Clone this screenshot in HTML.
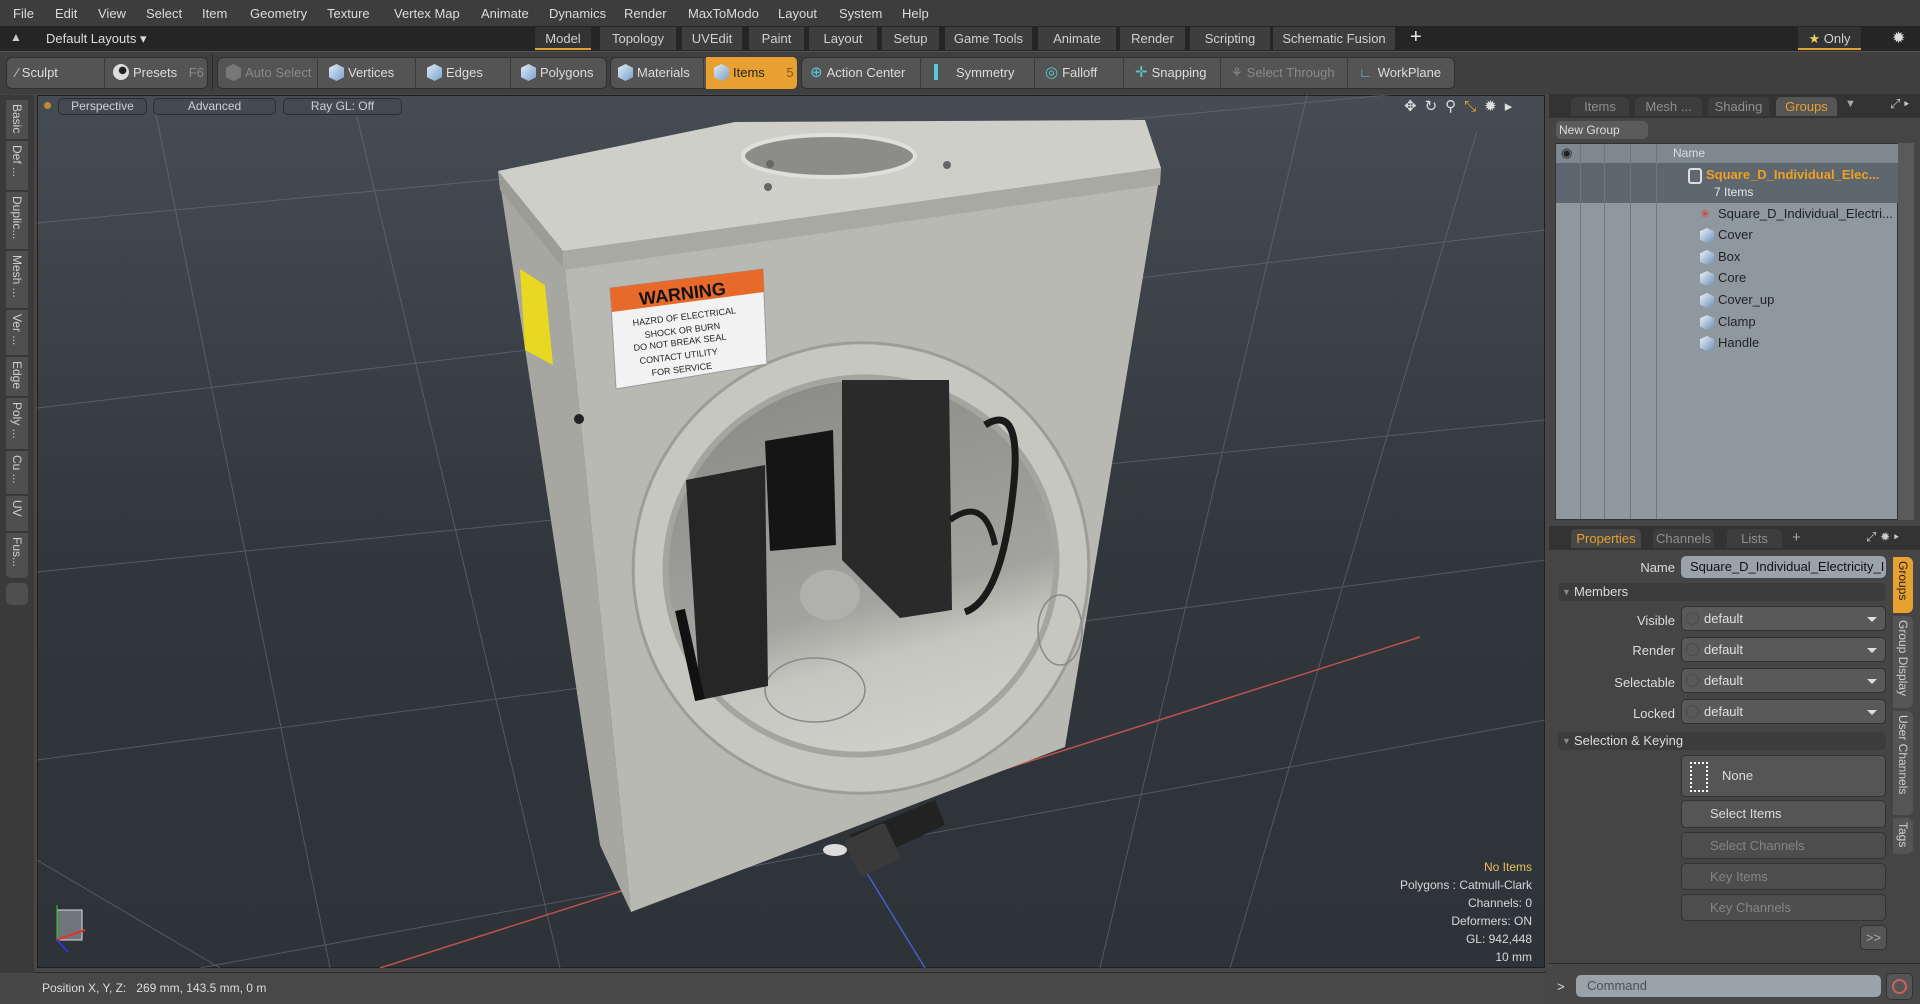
<!DOCTYPE html>
<html><head><meta charset="utf-8"><style>
*{margin:0;padding:0;box-sizing:border-box}
body{width:1920px;height:1004px;overflow:hidden;background:#474747;font-family:"Liberation Sans",sans-serif;font-size:13px;color:#d8d8d8;position:relative}
.a{position:absolute;white-space:nowrap}
.menu{left:0;top:0;width:1920px;height:26px;background:#3d3d3d}
.menu span{position:absolute;top:6px;font-size:13px;color:#dcdcdc}
.bar2{left:0;top:26px;width:1920px;height:25px;background:#252525}
.tab{position:absolute;top:27px;height:23px;background:#3e3e3e;color:#d0d0d0;font-size:13px;text-align:center;line-height:23px}
.tb{left:0;top:51px;width:1920px;height:43px;background:#3f3f3f;border-top:1px solid #555}
.grp{position:absolute;top:57px;height:32px;background:#545454;border-radius:6px;border:1px solid #303030}
.btn{position:absolute;top:57px;height:32px;line-height:32px;font-size:13px;color:#ddd;border-right:1px solid #3c3c3c}
.dim{color:#8a8a8a}
.ico{display:inline-block;width:15px;height:17px;vertical-align:-4px;margin:0 4px 0 8px;background:linear-gradient(135deg,#e0ecf8,#7aa0c8);clip-path:polygon(50% 0,100% 22%,100% 78%,50% 100%,0 78%,0 22%)}
.vp{left:37px;top:95px;width:1508px;height:873px;background:linear-gradient(#464c53,#30363b 55%,#2e3338);border:1px solid #1d1f21}
.vbtn{position:absolute;top:98px;height:17px;border:1px solid #2b2e31;border-radius:5px;background:#454a50;color:#d0d0d0;font-size:12px;text-align:center;line-height:15px}
.left{left:0;top:95px;width:34px;height:878px;background:#3a3a3a}
.vt{position:absolute;left:6px;width:22px;background:#4f4f4f;border-bottom:1px solid #353535;color:#cfcfcf;font-size:12px;writing-mode:vertical-rl;text-align:left;padding-top:4px;line-height:22px}
.status{left:34px;top:972px;width:1512px;height:32px;background:#484848;border-top:1px solid #2c2c2c}
.rp{left:1549px;top:94px;width:371px;height:910px;background:#454545}
.ptab{position:absolute;height:19px;line-height:19px;font-size:13px;color:#8f8f8f;text-align:center;background:#3d3d3d;border-radius:5px 5px 0 0}
.list{left:1555px;top:143px;width:343px;height:377px;background:#8f989f;border:1px solid #333}
.row{position:absolute;left:1718px;font-size:13px;color:#1e2226}
.cube{position:absolute;left:1700px;width:14px;height:15px;background:linear-gradient(135deg,#eef4fb,#6b8fb7);clip-path:polygon(50% 0,100% 22%,100% 78%,50% 100%,0 78%,0 22%)}
.lbl{position:absolute;font-size:13px;color:#dcdcdc;text-align:right;width:120px}
.dd{position:absolute;left:1681px;width:205px;height:25px;background:#595959;border:1px solid #303030;border-radius:5px}
.dd span{position:absolute;left:22px;top:4px;color:#e0e0e0;font-size:13px}
.dd i{position:absolute;left:4px;top:5px;width:13px;height:13px;border-radius:50%;border:1px solid #4a4a4a}
.dd b{position:absolute;right:8px;top:10px;border:5px solid transparent;border-top:5px solid #ddd;border-bottom:0}
.pb{position:absolute;left:1681px;width:205px;background:#555;border:1px solid #333;border-radius:5px;font-size:13px;color:#dcdcdc;padding-left:28px}
.sect{position:absolute;left:1558px;width:328px;height:18px;background:#3c3c3c;border-radius:5px;color:#dcdcdc;font-size:13px;line-height:18px;padding-left:16px}
.rvt{position:absolute;left:1893px;width:20px;background:#555;border-radius:0 6px 6px 0;writing-mode:vertical-rl;font-size:12px;color:#d0d0d0;line-height:20px;padding-top:4px}
</style></head><body>

<div class="a menu">
<span style="left:13px">File</span><span style="left:55px">Edit</span><span style="left:98px">View</span><span style="left:146px">Select</span><span style="left:202px">Item</span><span style="left:250px">Geometry</span><span style="left:327px">Texture</span><span style="left:394px">Vertex Map</span><span style="left:481px">Animate</span><span style="left:549px">Dynamics</span><span style="left:624px">Render</span><span style="left:688px">MaxToModo</span><span style="left:778px">Layout</span><span style="left:839px">System</span><span style="left:902px">Help</span>
</div>
<div class="a bar2"></div>
<div class="a" style="left:10px;top:30px;color:#ccc;font-size:12px">&#9650;</div>
<div class="a" style="left:46px;top:31px;font-size:13px;color:#ddd">Default Layouts &#9662;</div>
<div class="tab" style="left:535px;width:56px;border-bottom:2px solid #e0a030;background:#333">Model</div>
<div class="tab" style="left:600px;width:76px">Topology</div>
<div class="tab" style="left:682px;width:60px">UVEdit</div>
<div class="tab" style="left:749px;width:55px">Paint</div>
<div class="tab" style="left:809px;width:68px">Layout</div>
<div class="tab" style="left:882px;width:57px">Setup</div>
<div class="tab" style="left:945px;width:87px">Game Tools</div>
<div class="tab" style="left:1038px;width:78px">Animate</div>
<div class="tab" style="left:1120px;width:65px">Render</div>
<div class="tab" style="left:1190px;width:80px">Scripting</div>
<div class="tab" style="left:1273px;width:122px">Schematic Fusion</div>
<div class="a" style="left:1410px;top:26px;font-size:20px;color:#eee">+</div>
<div class="tab" style="left:1798px;width:63px;border-bottom:2px solid #e0a030;background:#333"><span style="color:#e8d060">&#9733;</span> Only</div>
<div class="a" style="left:1892px;top:28px;font-size:16px;color:#ddd">&#10041;</div>

<div class="a tb"></div>
<div class="grp" style="left:6px;width:202px"></div>
<div class="grp" style="left:217px;width:390px"></div>
<div class="grp" style="left:610px;width:188px"></div>
<div class="grp" style="left:801px;width:654px"></div>
<div class="a" style="left:212px;top:53px;width:1px;height:38px;background:#2a2a2a"></div>
<div class="btn" style="left:6px;width:99px"><span style="margin-left:10px;color:#ccc">&#8260;</span> Sculpt</div>
<div class="btn" style="left:105px;width:103px;border:0"><span style="display:inline-block;width:16px;height:16px;border-radius:50%;background:radial-gradient(circle at 60% 40%,#222 25%,#ddd 30%);vertical-align:-3px;margin:0 4px 0 8px"></span>Presets <span class="dim" style="margin-left:8px">F6</span></div>
<div class="btn dim" style="left:218px;width:100px"><span class="ico" style="background:#777"></span>Auto Select</div>
<div class="btn" style="left:321px;width:95px"><span class="ico"></span>Vertices <span class="dim" style="margin-left:10px">1</span></div>
<div class="btn" style="left:419px;width:92px"><span class="ico"></span>Edges <span class="dim" style="margin-left:18px">2</span></div>
<div class="btn" style="left:513px;width:93px;border:0"><span class="ico"></span>Polygons</div>
<div class="btn" style="left:610px;width:94px"><span class="ico"></span>Materials</div>
<div class="btn" style="left:706px;width:92px;background:#e8a030;color:#222;border-radius:0 5px 5px 0"><span class="ico"></span>Items <span style="margin-left:18px;color:#8a5a10">5</span></div>
<div class="btn" style="left:802px;width:119px"><span style="color:#5ac8d8;margin:0 4px 0 8px;font-size:15px">&#8853;</span>Action Center</div>
<div class="btn" style="left:922px;width:113px"><span style="display:inline-block;width:4px;height:16px;background:#5ac8d8;margin:0 18px 0 12px;vertical-align:-3px"></span>Symmetry</div>
<div class="btn" style="left:1037px;width:87px"><span style="color:#5ac8d8;margin:0 4px 0 8px;font-size:15px">&#9678;</span>Falloff</div>
<div class="btn" style="left:1127px;width:94px"><span style="color:#5ac8d8;margin:0 4px 0 8px;font-size:15px">&#10011;</span>Snapping</div>
<div class="btn dim" style="left:1223px;width:125px"><span style="margin:0 4px 0 8px">&#9880;</span>Select Through</div>
<div class="btn" style="left:1351px;width:104px;border:0"><span style="color:#5ac8d8;margin:0 6px 0 8px">&#8735;</span>WorkPlane</div>

<div class="a left"></div>
<div class="vt" style="top:100px;height:40px">Basic</div>
<div class="vt" style="top:141px;height:50px">Def ...</div>
<div class="vt" style="top:192px;height:58px">Duplic...</div>
<div class="vt" style="top:251px;height:58px">Mesh ...</div>
<div class="vt" style="top:310px;height:46px">Ver ...</div>
<div class="vt" style="top:357px;height:40px">Edge</div>
<div class="vt" style="top:398px;height:52px">Poly ...</div>
<div class="vt" style="top:451px;height:44px">Cu ...</div>
<div class="vt" style="top:496px;height:36px">UV</div>
<div class="vt" style="top:533px;height:46px;border-radius:0 0 5px 5px">Fus...</div>
<div class="a" style="left:6px;top:583px;width:22px;height:22px;background:#4f4f4f;border-radius:5px"></div>

<div class="a vp"></div>
<svg class="a" style="left:37px;top:95px" width="1508" height="873" viewBox="37 95 1508 873">
<defs>
<linearGradient id="ig" x1="0" y1="0" x2="0" y2="1"><stop offset="0" stop-color="#8c8c88"/><stop offset=".6" stop-color="#a2a29e"/><stop offset=".75" stop-color="#c6c6c0"/><stop offset="1" stop-color="#d0d0ca"/></linearGradient>
</defs>
<g stroke="#6f7880" stroke-width="1" opacity=".55" fill="none">
<line x1="37" y1="223" x2="1545" y2="80"/>
<line x1="37" y1="408" x2="1545" y2="230"/>
<line x1="37" y1="572" x2="1545" y2="420"/>
<line x1="37" y1="760" x2="1545" y2="560"/>
<line x1="200" y1="968" x2="1545" y2="720"/>
<line x1="153" y1="100" x2="330" y2="968"/>
<line x1="357" y1="117" x2="560" y2="968"/>
<line x1="1307" y1="95" x2="1100" y2="968"/>
<line x1="1477" y1="131" x2="1230" y2="968"/>
<line x1="37" y1="860" x2="220" y2="968"/>
</g>
<line x1="380" y1="968" x2="1420" y2="637" stroke="#c05050" stroke-width="1.5"/>
<line x1="857" y1="857" x2="925" y2="968" stroke="#4a5ad0" stroke-width="1.5"/>
<polygon points="498,171 502,196 600,845 631,912 563,251" fill="#a7a7a1"/>
<polygon points="563,251 1161,168 1065,747 631,912" fill="#b9b9b3"/>
<polygon points="498,171 735,122 1145,120 1161,168 563,251" fill="#cfcfc9"/>
<polygon points="498,171 563,251 563,268 500,190" fill="#9c9c96"/>
<polygon points="563,251 1161,168 1160,185 563,270" fill="#a9a9a3"/>
<ellipse cx="829" cy="156" rx="86" ry="21" fill="#8c8c88" stroke="#e0e0da" stroke-width="4"/>
<circle cx="770" cy="164" r="4" fill="#666"/><circle cx="947" cy="165" r="4" fill="#666"/><circle cx="768" cy="187" r="4" fill="#666"/>
<ellipse cx="861" cy="568" rx="228" ry="225" transform="rotate(-15 861 568)" fill="#c7c7c1" stroke="#9d9d97" stroke-width="3"/>
<ellipse cx="861" cy="566" rx="196" ry="188" transform="rotate(-15 861 566)" fill="url(#ig)" stroke="#a5a59f" stroke-width="6"/>
<ellipse cx="815" cy="690" rx="50" ry="32" fill="none" stroke="#888" stroke-width="1.5"/>
<ellipse cx="830" cy="595" rx="30" ry="25" fill="#b0b0ac"/>
<ellipse cx="1060" cy="630" rx="22" ry="35" fill="none" stroke="#888" stroke-width="1.5"/>
<polygon points="686,480 765,465 768,686 700,700" fill="#262626"/>
<polygon points="765,441 833,430 836,545 770,551" fill="#151515"/>
<polygon points="842,380 949,380 952,610 900,618 842,560" fill="#2a2a2a"/>
<path d="M985 425 Q1025 400 1012 500 Q1000 600 965 612" stroke="#1a1a1a" stroke-width="7" fill="none"/>
<path d="M950 520 Q985 495 995 545" stroke="#1a1a1a" stroke-width="6" fill="none"/>
<path d="M680 610 L700 700" stroke="#111" stroke-width="10"/>
<polygon points="610,288 763,269 767,364 616,389" fill="#f2f2f2" stroke="#999"/>
<polygon points="610,288 763,269 764,292 612,312" fill="#e86a2a"/>
<text x="640" y="305" font-family="Liberation Sans" font-weight="bold" font-size="18" fill="#111" transform="rotate(-7 640 305)">WARNING</text>
<text x="633" y="326" font-family="Liberation Sans" font-size="9" fill="#222" transform="rotate(-7 633 326)">HAZRD OF ELECTRICAL</text>
<text x="645" y="338" font-family="Liberation Sans" font-size="9" fill="#222" transform="rotate(-7 645 338)">SHOCK OR BURN</text>
<text x="634" y="351" font-family="Liberation Sans" font-size="9" fill="#222" transform="rotate(-7 634 351)">DO NOT BREAK SEAL</text>
<text x="640" y="364" font-family="Liberation Sans" font-size="9" fill="#222" transform="rotate(-7 640 364)">CONTACT UTILITY</text>
<text x="652" y="376" font-family="Liberation Sans" font-size="9" fill="#222" transform="rotate(-7 652 376)">FOR SERVICE</text>
<polygon points="520,269 545,285 553,365 525,350" fill="#e8d820"/>
<circle cx="579" cy="419" r="5" fill="#222"/>
<path d="M850 835 L935 800 L945 825 L870 860Z" fill="#222"/>
<rect x="850" y="830" width="45" height="40" rx="4" fill="#3a3a3a" transform="rotate(-25 872 850)"/>
<ellipse cx="835" cy="850" rx="12" ry="6" fill="#ddd"/>
<rect x="57" y="910" width="25" height="30" fill="#70757a" stroke="#ddd"/>
<line x1="57" y1="905" x2="57" y2="940" stroke="#3c3"/><line x1="57" y1="940" x2="85" y2="930" stroke="#d33" stroke-width="2"/><line x1="57" y1="940" x2="68" y2="952" stroke="#33d" stroke-width="2"/>
</svg>
<div class="a" style="left:44px;top:102px;width:7px;height:7px;border-radius:50%;background:#c08a30"></div>
<div class="vbtn" style="left:58px;width:89px">Perspective</div>
<div class="vbtn" style="left:153px;width:123px">Advanced</div>
<div class="vbtn" style="left:283px;width:119px">Ray GL: Off</div>
<div class="a" style="left:1404px;top:97px;font-size:15px;color:#ddd;letter-spacing:8px">&#10021;&#8635;&#9906;<span style="color:#e0b020">&#10529;</span>&#10041;&#9656;</div>
<div class="a" style="left:1300px;top:858px;width:232px;text-align:right;font-size:12px;line-height:18px;color:#d8d8d8"><span style="color:#e8c060">No Items</span><br>Polygons : Catmull-Clark<br>Channels: 0<br>Deformers: ON<br>GL: 942,448<br>10 mm</div>

<div class="a status"><span class="a" style="left:8px;top:8px;font-size:12px;color:#ddd">Position X, Y, Z:&nbsp;&nbsp; 269 mm, 143.5 mm, 0 m</span></div>

<div class="a rp"></div>
<div class="a" style="left:1549px;top:94px;width:371px;height:24px;background:#333"></div>
<div class="ptab" style="left:1571px;top:97px;width:58px">Items</div>
<div class="ptab" style="left:1635px;top:97px;width:67px">Mesh ...</div>
<div class="ptab" style="left:1708px;top:97px;width:61px">Shading</div>
<div class="ptab" style="left:1776px;top:97px;width:61px;background:#555;color:#e8a030">Groups</div>
<div class="a" style="left:1845px;top:98px;color:#aaa;font-size:11px">&#9660;</div>
<div class="a" style="left:1890px;top:96px;color:#ccc;font-size:13px">&#10530; &#9656;</div>
<div class="a" style="left:1556px;top:121px;width:92px;height:18px;background:#5b5b5b;border-radius:5px;font-size:12px;color:#ddd;padding-left:3px;line-height:18px">New Group</div>
<div class="a list"></div>
<div class="a" style="left:1556px;top:144px;width:342px;height:19px;background:#7f8890"></div>
<div class="a" style="left:1556px;top:163px;width:342px;height:40px;background:#5e676f"></div>
<div class="a" style="left:1580px;top:144px;width:1px;height:375px;background:#6e777e"></div>
<div class="a" style="left:1604px;top:144px;width:1px;height:375px;background:#6e777e"></div>
<div class="a" style="left:1630px;top:144px;width:1px;height:375px;background:#6e777e"></div>
<div class="a" style="left:1656px;top:144px;width:1px;height:375px;background:#6e777e"></div>
<div class="a" style="left:1898px;top:143px;width:16px;height:377px;background:#5a5a5a"></div>
<div class="a" style="left:1561px;top:145px;font-size:13px;color:#222">&#9673;</div>
<div class="a" style="left:1673px;top:146px;font-size:12px;color:#d8dde2">Name</div>
<div class="a" style="left:1688px;top:168px;width:14px;height:16px;border:2px solid #ddd;border-radius:3px"></div>
<div class="a" style="left:1706px;top:167px;font-size:13px;font-weight:bold;color:#f0a020">Square_D_Individual_Elec...</div>
<div class="a" style="left:1714px;top:185px;font-size:12px;color:#e4e8ec">7 Items</div>
<div class="cube" style="top:207px;background:none;clip-path:none;color:#d33;font-size:12px">&#10035;</div>
<div class="row" style="top:206px">Square_D_Individual_Electri...</div>
<div class="cube" style="top:228px"></div><div class="row" style="top:227px">Cover</div>
<div class="cube" style="top:250px"></div><div class="row" style="top:249px">Box</div>
<div class="cube" style="top:271px"></div><div class="row" style="top:270px">Core</div>
<div class="cube" style="top:293px"></div><div class="row" style="top:292px">Cover_up</div>
<div class="cube" style="top:315px"></div><div class="row" style="top:314px">Clamp</div>
<div class="cube" style="top:336px"></div><div class="row" style="top:335px">Handle</div>

<div class="a" style="left:1549px;top:526px;width:371px;height:24px;background:#333"></div>
<div class="ptab" style="left:1571px;top:529px;width:70px;background:#474747;color:#e8a030">Properties</div>
<div class="ptab" style="left:1653px;top:529px;width:61px">Channels</div>
<div class="ptab" style="left:1727px;top:529px;width:55px">Lists</div>
<div class="a" style="left:1792px;top:529px;color:#aaa;font-size:15px">+</div>
<div class="a" style="left:1866px;top:529px;color:#ccc;font-size:13px">&#10530; &#10041; &#9656;</div>
<div class="lbl" style="left:1555px;top:560px">Name</div>
<div class="a" style="left:1681px;top:556px;width:205px;height:22px;background:#9aa2aa;border-radius:5px;font-size:13px;color:#111;padding:3px 0 0 9px;overflow:hidden">Square_D_Individual_Electricity_I</div>
<div class="sect" style="top:583px"><span style="position:absolute;left:4px;color:#888;font-size:9px">&#9660;</span>Members</div>
<div class="lbl" style="left:1555px;top:613px">Visible</div><div class="dd" style="top:606px"><i></i><span>default</span><b></b></div>
<div class="lbl" style="left:1555px;top:643px">Render</div><div class="dd" style="top:637px"><i></i><span>default</span><b></b></div>
<div class="lbl" style="left:1555px;top:675px">Selectable</div><div class="dd" style="top:668px"><i></i><span>default</span><b></b></div>
<div class="lbl" style="left:1555px;top:706px">Locked</div><div class="dd" style="top:699px"><i></i><span>default</span><b></b></div>
<div class="sect" style="top:732px"><span style="position:absolute;left:4px;color:#888;font-size:9px">&#9660;</span>Selection &amp; Keying</div>
<div class="pb" style="top:755px;height:42px;padding-left:40px;line-height:40px">None</div>
<div class="a" style="left:1690px;top:762px;width:18px;height:30px;border:2px dotted #fff"></div>
<div class="pb" style="top:800px;height:28px;line-height:26px">Select Items</div>
<div class="pb" style="top:832px;height:27px;line-height:25px;background:#4d4d4d;color:#858585">Select Channels</div>
<div class="pb" style="top:863px;height:27px;line-height:25px;background:#4d4d4d;color:#858585">Key Items</div>
<div class="pb" style="top:894px;height:27px;line-height:25px;background:#4d4d4d;color:#858585">Key Channels</div>
<div class="a" style="left:1860px;top:925px;width:27px;height:25px;background:#555;border-radius:5px;border:1px solid #333;color:#aaa;text-align:center;line-height:23px">&gt;&gt;</div>
<div class="rvt" style="top:557px;height:56px;background:#e8a030;color:#222">Groups</div>
<div class="rvt" style="top:616px;height:92px">Group Display</div>
<div class="rvt" style="top:711px;height:104px">User Channels</div>
<div class="rvt" style="top:818px;height:36px">Tags</div>

<div class="a" style="left:1549px;top:963px;width:371px;height:41px;background:#474747;border-top:1px solid #2c2c2c"></div>
<div class="a" style="left:1557px;top:979px;color:#ddd">&gt;</div>
<div class="a" style="left:1576px;top:975px;width:305px;height:22px;background:#9aa2aa;border-radius:5px;color:#4a525a;padding:3px 0 0 11px">Command</div>
<div class="a" style="left:1886px;top:973px;width:27px;height:27px;background:#555;border-radius:5px;border:1px solid #333"><div style="margin:5px;width:15px;height:15px;border:2px solid #d06060;border-radius:50%"></div></div>
</body></html>
